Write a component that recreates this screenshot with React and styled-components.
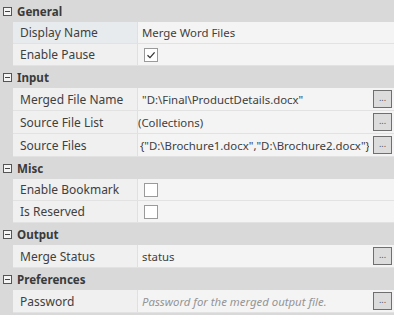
import React from "react";
import styled, { createGlobalStyle } from "styled-components";

const GlobalStyle = createGlobalStyle`
  html, body {
    margin: 0;
    padding: 0;
    background: #d9d9d9;
  }
  body {
    font-family: "Noto Sans", "Open Sans", Arial, sans-serif;
    font-size: 12px;
    color: #333;
  }
`;

const sections = [
  {
    title: "General",
    rows: [
      { name: "Display Name", value: "Merge Word Files", selected: true },
      { name: "Enable Pause", check: true },
    ],
  },
  {
    title: "Input",
    rows: [
      { name: "Merged File Name", value: '"D:\\Final\\ProductDetails.docx"', button: true },
      { name: "Source File List", value: "(Collections)", button: true, indent: 0 },
      {
        name: "Source Files",
        value: '{"D:\\Brochure1.docx","D:\\Brochure2.docx"}',
        button: true,
        indent: 2,
      },
    ],
  },
  {
    title: "Misc",
    rows: [
      { name: "Enable Bookmark", check: false },
      { name: "Is Reserved", check: false },
    ],
  },
  {
    title: "Output",
    rows: [{ name: "Merge Status", value: "status", button: true }],
  },
  {
    title: "Preferences",
    rows: [
      {
        name: "Password",
        value: "Password for the merged output file.",
        placeholder: true,
        button: true,
      },
    ],
  },
];

const Grid = styled.div`
  width: 394px;
  height: 315px;
  overflow: hidden;
  background: #d9d9d9;
`;

const Header = styled.div`
  display: flex;
  align-items: center;
  height: 22px;
  gap: 5px;
  padding-left: 3px;
  font-weight: 700;
  font-size: 11.6px;
  color: #3a3a3a;
`;

const Toggle = styled.span`
  display: inline-flex;
  align-items: center;
  justify-content: center;
  width: 7px;
  height: 7px;
  border: 1px solid #555;
  background: #f4f4f4;

  &::after {
    content: "";
    width: 5px;
    height: 1px;
    background: #444;
  }
`;

const Row = styled.div`
  display: grid;
  grid-template-columns: 125px 1fr;
  margin-left: 13px;
  height: ${({ $tall }) => ($tall ? 23 : 22)}px;
  box-sizing: border-box;
  border-bottom: 1px solid #e2e2e2;
`;

const NameCell = styled.div`
  display: flex;
  align-items: center;
  padding-left: 7px;
  background: ${({ $selected }) => ($selected ? "#e7ebee" : "#f0f0f0")};
  border-right: 1px solid #e0e0e0;
  color: #404040;
  white-space: nowrap;
`;

const ValueCell = styled.div`
  display: flex;
  align-items: center;
  gap: 4px;
  padding-left: ${({ $indent }) => $indent}px;
  padding-right: 2px;
  background: #f4f4f4;
  min-width: 0;
`;

const ValueText = styled.span`
  flex: 1;
  min-width: 0;
  font-size: 11.4px;
  white-space: nowrap;
  overflow: hidden;
  color: ${({ $placeholder }) => ($placeholder ? "#959595" : "#404040")};
  font-style: ${({ $placeholder }) => ($placeholder ? "italic" : "normal")};
`;

const Ellipsis = styled.button`
  flex: none;
  width: 19px;
  height: 18px;
  padding: 0 0 5px;
  margin: 0;
  border: 1px solid #6f6f6f;
  background: #dcdcdc;
  color: #555;
  font-family: inherit;
  font-size: 9px;
  line-height: 1;
  display: flex;
  align-items: flex-end;
  justify-content: center;
`;

const Check = styled.span`
  margin-left: 2px;
  width: 12px;
  height: 12px;
  border: 1px solid #9a9a9a;
  background: #fff;
  display: flex;
  align-items: center;
  justify-content: center;
`;

const CheckMark = () => (
  <svg width="10" height="10" viewBox="0 0 10 10">
    <path d="M1.5 5.2 L4 7.6 L8.6 2.4" fill="none" stroke="#333" strokeWidth="1.3" />
  </svg>
);

const Property = ({ row }) => (
  <Row $tall={row.button}>
    <NameCell $selected={row.selected}>{row.name}</NameCell>
    <ValueCell $indent={row.indent ?? 4}>
      {row.check !== undefined ? (
        <Check>{row.check && <CheckMark />}</Check>
      ) : (
        <ValueText $placeholder={row.placeholder}>{row.value}</ValueText>
      )}
      {row.button && <Ellipsis>...</Ellipsis>}
    </ValueCell>
  </Row>
);

export default function App() {
  return (
    <>
      <GlobalStyle />
      <Grid>
        {sections.map((section) => (
          <div key={section.title}>
            <Header>
              <Toggle />
              {section.title}
            </Header>
            {section.rows.map((row) => (
              <Property key={row.name} row={row} />
            ))}
          </div>
        ))}
      </Grid>
    </>
  );
}
